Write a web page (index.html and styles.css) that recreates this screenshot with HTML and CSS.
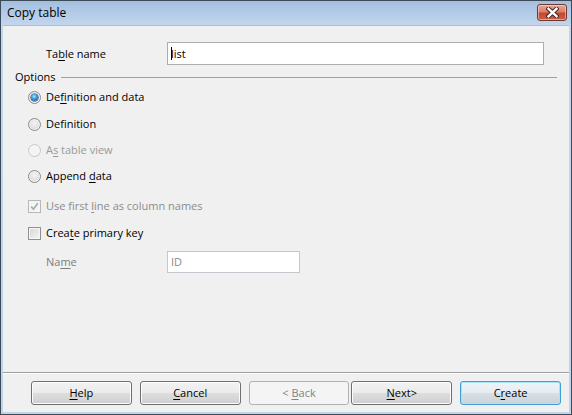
FILE: index.html
```
<!DOCTYPE html>
<html lang="en">
<head>
<meta charset="utf-8">
<title>Copy table</title>
<link rel="stylesheet" href="styles.css">
</head>
<body>
<div class="window">
  <div class="titlebar">
    <span class="title">Copy table</span>
    <button class="close" aria-label="Close">
      <svg width="13" height="11" viewBox="0 0 13 11">
        <path d="M2.5 1.8 L10.5 9.2 M10.5 1.8 L2.5 9.2" stroke="#3b2a28" stroke-width="4.4" stroke-linecap="square" fill="none"/>
        <path d="M2.5 1.8 L10.5 9.2 M10.5 1.8 L2.5 9.2" stroke="#ffffff" stroke-width="2.4" stroke-linecap="square" fill="none"/>
      </svg>
    </button>
  </div>
  <div class="client">
    <div class="field-row name-row">
      <label class="field-label">Ta<u>b</u>le name</label>
      <div class="textbox wide"><span class="caret"></span>list</div>
    </div>

    <div class="group-header">
      <span class="group-title">Options</span>
      <span class="group-line"></span>
    </div>

    <div class="option r1"><span class="radio checked"></span><span>De<u>f</u>inition and data</span></div>
    <div class="option r2"><span class="radio"></span><span>Def<u>i</u>nition</span></div>
    <div class="option r3 disabled"><span class="radio"></span><span>A<u>s</u> table view</span></div>
    <div class="option r4"><span class="radio"></span><span>Append <u>d</u>ata</span></div>
    <div class="option c1 disabled"><span class="check checked">
      <svg width="11" height="11" viewBox="0 0 11 11"><path d="M2.2 5.6 L4.4 8.2 L8.8 2.2" stroke="#a9a9a9" stroke-width="1.6" fill="none"/></svg>
    </span><span>Use first <u>l</u>ine as column names</span></div>
    <div class="option c2"><span class="check"></span><span>Crea<u>t</u>e primary key</span></div>

    <div class="field-row key-row disabled">
      <label class="field-label">Na<u>m</u>e</label>
      <div class="textbox narrow">ID</div>
    </div>

    <div class="footer">
      <button class="btn"><u>H</u>elp</button>
      <button class="btn"><u>C</u>ancel</button>
      <button class="btn disabled-btn">&lt; <u>B</u>ack</button>
      <button class="btn next"><u>N</u>ext&gt;</button>
      <button class="btn default">C<u>r</u>eate</button>
    </div>
  </div>
</div>
</body>
</html>
```
FILE: styles.css
```
* { box-sizing: border-box; }

html, body {
  margin: 0;
  padding: 0;
}

body {
  width: 572px;
  height: 415px;
  overflow: hidden;
  background: #f0f0f0;
  font-family: "Open Sans", "Noto Sans", "DejaVu Sans", sans-serif;
  font-size: 11px;
  color: #000;
}

u { text-decoration: underline; text-underline-offset: 2px; text-decoration-thickness: 1px; }

.window {
  width: 572px;
  height: 415px;
  border: 1px solid #3c4a58;
  padding: 0 2px 2px 2px;
  display: flex;
  flex-direction: column;
  background: linear-gradient(#a9c3e2 0, #c3d7ee 24px, #bfd4ec 100%);
}

.titlebar {
  height: 24px;
  margin: 0 -2px;
  display: flex;
  align-items: center;
  padding: 0 4px 0 6px;
  background: linear-gradient(#a3bedd 0%, #b3cbe7 50%, #c2d6ed 100%);
}

.title {
  font-size: 12px;
  line-height: 16px;
  margin-top: -1px;
  color: #000;
}

.close {
  margin-left: auto;
  width: 30px;
  height: 17px;
  padding: 0;
  margin-top: -2px;
  border: 1px solid #6b3a31;
  border-radius: 3px;
  background: linear-gradient(#e7a797 0%, #d8806c 45%, #c4472f 55%, #cf5d43 100%);
  box-shadow: inset 0 0 0 1px rgba(255, 220, 210, 0.55);
  display: flex;
  align-items: center;
  justify-content: center;
}

.client {
  flex: 1;
  display: flex;
  flex-direction: column;
  background: #f0f0f0;
  border-top: 1px solid #a8bdd6;
  padding-top: 16px;
}

.field-row {
  display: flex;
  align-items: center;
  padding-left: 43px;
}

.field-label {
  width: 121px;
  line-height: 16px;
}

.textbox {
  height: 23px;
  background: #fff;
  border: 1px solid #abadb3;
  padding: 0 3px;
  line-height: 20px;
  display: flex;
  align-items: center;
}

.textbox.wide { width: 377px; }
.textbox.narrow { width: 133px; height: 22px; border-color: #c3c8cf; color: #8a8a8a; }

.caret {
  display: inline-block;
  width: 1px;
  height: 13px;
  background: #000;
  margin-right: -1px;
}

.group-header {
  display: flex;
  align-items: center;
  margin-top: 4px;
  padding: 0 12px;
  height: 16px;
}

.group-title { line-height: 16px; }

.group-line {
  flex: 1;
  height: 1px;
  margin-left: 5px;
  margin-top: 1px;
  background: #a0a0a0;
}

.option {
  display: flex;
  align-items: center;
  height: 16px;
  padding-left: 25px;
  line-height: 16px;
}

.option.r1 { margin-top: 4px; }
.option.r2 { margin-top: 11px; }
.option.r3 { margin-top: 10px; }
.option.r4 { margin-top: 10px; }
.option.c1 { margin-top: 14px; }
.option.c2 { margin-top: 11px; }
.key-row { margin-top: 10px; }

.disabled { color: #9a9a9a; }
.key-row.disabled { color: #7c7c7c; }
.option.c1.disabled { color: #8c8c8c; }

.radio {
  position: relative;
  width: 13px;
  height: 13px;
  margin-right: 5px;
  border-radius: 50%;
  border: 1px solid #8a8a8a;
  background: radial-gradient(circle at 50% 40%, #f4f4f4 0%, #e0e0e0 55%, #c8c8c8 100%);
  box-shadow: inset 0 0 0 1px #f4f4f4;
  flex: none;
}

.radio.checked::after {
  content: "";
  position: absolute;
  left: 2px;
  top: 2px;
  width: 7px;
  height: 7px;
  border-radius: 50%;
  background: radial-gradient(circle at 45% 35%, #b9e6fd 0%, #3e9be0 40%, #14508e 100%);
  box-shadow: 0 0 0 0.5px #0d3d6e;
}

.disabled .radio {
  border-color: #c9c9c9;
  background: #f4f4f4;
  box-shadow: none;
}

.check {
  width: 13px;
  height: 13px;
  margin-right: 5px;
  border: 1px solid #8f8f8f;
  background: linear-gradient(135deg, #d6d6d6 0%, #f6f6f6 100%);
  box-shadow: inset 0 0 0 1px #f6f6f6;
  flex: none;
  display: flex;
  align-items: center;
  justify-content: center;
}

.disabled .check {
  border-color: #b8b8b8;
  background: #f4f4f4;
  box-shadow: none;
}

.footer {
  margin-top: auto;
  border-top: 1px solid #a0a0a0;
  box-shadow: inset 0 1px 0 #ffffff;
  padding: 8px 0 7px 28px;
  display: flex;
}

.btn {
  width: 101px;
  height: 24px;
  margin-right: 8px;
  padding: 0 0 1px 0;
  border: 1px solid #707070;
  border-radius: 3px;
  font-family: inherit;
  font-size: 11px;
  color: #000;
  background: linear-gradient(#f2f2f2 0%, #ebebeb 48%, #dddddd 52%, #cfcfcf 100%);
  box-shadow: inset 0 0 0 1px #fbfbfb;
}

.btn.disabled-btn {
  margin-right: 2px;
  border-color: #adb2b5;
  background: #f4f4f4;
  color: #838383;
  box-shadow: none;
}

.btn.default {
  border-color: #3c9fd6;
  box-shadow: inset 0 0 0 1px #a8e4fb;
  background: linear-gradient(#eef4f8 0%, #e6edf2 48%, #d7dfe5 52%, #cbd3d9 100%);
}
```
